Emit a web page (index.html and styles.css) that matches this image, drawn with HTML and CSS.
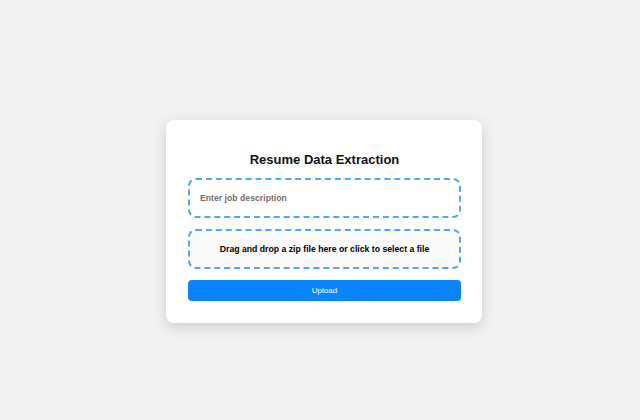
FILE: index.html
```html
<!DOCTYPE html>
<html lang="en">
<head>
    <meta charset="UTF-8">
    <meta name="viewport" content="width=device-width, initial-scale=1.0">
    <title>Resume Data Extraction</title>
    <link rel="stylesheet" href="styles.css">
</head>
<body>
    <div class="container">
        <h2>Resume Data Extraction</h2>

        <input type="text" class="job-input" placeholder="Enter job description">

        <div class="dropzone">
            <p>Drag and drop a zip file here or click to select a file</p>
        </div>

        <button class="upload-btn">Upload</button>
    </div>
</body>
</html>
```

FILE: styles.css
```css
* { margin: 0; padding: 0; box-sizing: border-box; }

body {
    font-family: 'Liberation Sans', Arial, sans-serif;
    background: #f2f2f2;
    height: 100vh;
    display: flex;
    align-items: center;
    justify-content: center;
    padding: 22px 0 0 8px;
}

.container {
    width: 316px;
    background: #ffffff;
    border-radius: 8px;
    padding: 32px 21px 22px 22px;
    box-shadow: 0 4px 14px rgba(0, 0, 0, 0.16);
    display: flex;
    flex-direction: column;
}

h2 {
    font-size: 13px;
    line-height: 15px;
    font-weight: 700;
    color: #111;
    text-align: center;
    margin-bottom: 11px;
}

.job-input {
    height: 40px;
    width: 100%;
    border: 2px dashed #4ea7f7;
    border-radius: 8px;
    padding: 0 10px;
    font-family: inherit;
    font-size: 8.7px;
    font-weight: 700;
    color: #333;
    background: #fff;
    outline: none;
}

.job-input::placeholder { color: #707070; }

.dropzone {
    margin-top: 11px;
    height: 40px;
    border: 2px dashed #4ea7f7;
    border-radius: 8px;
    background: #f9f9f9;
    display: flex;
    align-items: center;
    justify-content: center;
    cursor: pointer;
}

.dropzone p {
    font-size: 8.7px;
    font-weight: 700;
    color: #000;
}

.upload-btn {
    margin-top: 11px;
    height: 21px;
    width: 100%;
    border: none;
    border-radius: 4px;
    background: #0b84ff;
    color: #ffffff;
    font-family: inherit;
    font-size: 8px;
    cursor: pointer;
}
```
